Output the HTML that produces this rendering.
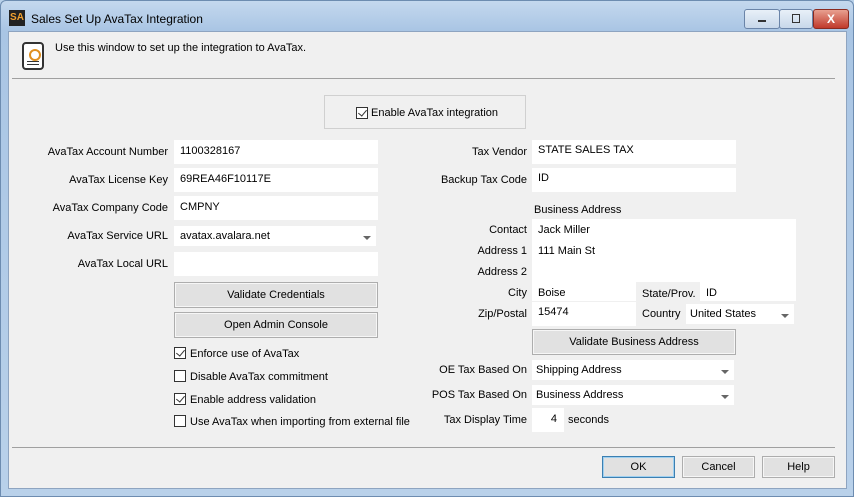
<!DOCTYPE html><html><head><style>
body{margin:0;width:854px;height:497px;overflow:hidden;font-family:"Liberation Sans",sans-serif;font-size:11px;color:#000;background:#b9d1ea}
.a{position:absolute}
.win{position:absolute;left:0;top:0;width:852px;height:495px;border:1px solid #6d8cb0;background:linear-gradient(#c4d8ee,#a9c5e4 30px,#b9d1ea);border-radius:6px 6px 0 0}
.cl{position:absolute;left:8px;top:31px;width:837px;height:456px;background:#f0f0f0;border:1px solid #8ea4c0}
.in{position:absolute;background:#fff;height:24px;line-height:22px;padding-left:6px;box-sizing:border-box}
.lb{position:absolute;text-align:right;height:24px;line-height:24px}
.bt{position:absolute;background:#e1e1e1;border:1px solid #adadad;box-shadow:inset 0 0 0 1px #f6f6f6;text-align:center;box-sizing:border-box}
.cb{position:absolute;width:12px;height:12px;border:1px solid #333;background:#fff;box-sizing:border-box}
.ck:after{content:"";position:absolute;left:3px;top:0px;width:4px;height:7px;border:solid #333;border-width:0 1.5px 1.5px 0;transform:rotate(40deg)}
.dd:after{content:"";position:absolute;right:5px;top:10px;border:4px solid transparent;border-top:4px solid #666}
</style></head><body>
<div class="win"></div>
<div class="a" style="left:9px;top:10px;width:16px;height:16px;background:#222;color:#f0a030;font-weight:bold;font-size:10px;line-height:16px;text-align:center">SA</div>
<div class="a" style="left:31px;top:12px;font-size:12px">Sales Set Up AvaTax Integration</div>
<div class="a" style="left:744px;top:9px;width:34px;height:18px;border:1px solid #6a84a8;border-radius:3px;background:linear-gradient(#e8f0f8,#c8d8ea)"><div class="a" style="left:13px;top:10px;width:8px;height:2px;background:#333"></div></div>
<div class="a" style="left:779px;top:9px;width:32px;height:18px;border:1px solid #6a84a8;border-radius:3px;background:linear-gradient(#e8f0f8,#c8d8ea)"><div class="a" style="left:12px;top:4px;width:6px;height:7px;border:1px solid #333"></div></div>
<div class="a" style="left:813px;top:9px;width:34px;height:18px;border:1px solid #8a2a20;border-radius:3px;background:linear-gradient(#e8a090,#c0392b);color:#fff;font-weight:bold;text-align:center;line-height:18px;font-size:12px">X</div>
<div class="cl"></div>
<div class="a" style="left:22px;top:42px;width:22px;height:28px;border:2px solid #333;border-radius:4px;background:#fff;box-sizing:border-box"><div class="a" style="left:5px;top:5px;width:8px;height:8px;border:2px solid #e09020;border-radius:50%"></div><div class="a" style="left:3px;top:17px;width:12px;height:1px;background:#333"></div><div class="a" style="left:3px;top:20px;width:12px;height:1px;background:#333"></div></div>
<div class="a" style="left:55px;top:42px">Use this window to set up the integration to AvaTax.</div>
<div class="a" style="left:12px;top:78px;width:823px;height:1px;background:#a0a0a0"></div>
<div class="a" style="left:324px;top:95px;width:202px;height:34px;border:1px solid #d0d0d0;box-sizing:border-box"></div>
<div class="cb ck" style="left:356px;top:107px"></div><div class="a" style="left:371px;top:107px">Enable AvaTax integration</div>
<div class="lb" style="left:10px;width:158px;top:140px">AvaTax Account Number</div><div class="in" style="left:174px;top:140px;width:204px">1100328167</div>
<div class="lb" style="left:10px;width:158px;top:168px">AvaTax License Key</div><div class="in" style="left:174px;top:168px;width:204px">69REA46F10117E</div>
<div class="lb" style="left:10px;width:158px;top:196px">AvaTax Company Code</div><div class="in" style="left:174px;top:196px;width:204px">CMPNY</div>
<div class="lb" style="left:10px;width:158px;top:224px">AvaTax Service URL</div><div class="in dd" style="left:174px;top:226px;width:202px;height:20px;line-height:20px">avatax.avalara.net</div>
<div class="lb" style="left:10px;width:158px;top:252px">AvaTax Local URL</div><div class="in" style="left:174px;top:252px;width:204px"></div>
<div class="bt" style="left:174px;top:282px;width:204px;height:26px;line-height:24px">Validate Credentials</div>
<div class="bt" style="left:174px;top:312px;width:204px;height:26px;line-height:24px">Open Admin Console</div>
<div class="cb ck" style="left:174px;top:347px"></div><div class="a" style="left:190px;top:348px">Enforce use of AvaTax</div>
<div class="cb" style="left:174px;top:370px"></div><div class="a" style="left:190px;top:371px">Disable AvaTax commitment</div>
<div class="cb ck" style="left:174px;top:393px"></div><div class="a" style="left:190px;top:394px">Enable address validation</div>
<div class="cb" style="left:174px;top:415px"></div><div class="a" style="left:190px;top:416px">Use AvaTax when importing from external file</div>
<div class="lb" style="left:400px;width:127px;top:140px">Tax Vendor</div><div class="in" style="left:532px;top:140px;width:204px;line-height:20px">STATE SALES TAX</div>
<div class="lb" style="left:400px;width:127px;top:168px">Backup Tax Code</div><div class="in" style="left:532px;top:168px;width:204px;line-height:20px">ID</div>
<div class="a" style="left:534px;top:204px">Business Address</div>
<div class="a" style="left:532px;top:219px;width:264px;height:82px;background:#fff"></div>
<div class="lb" style="left:400px;width:127px;top:218px">Contact</div><div class="a" style="left:538px;top:224px">Jack Miller</div>
<div class="lb" style="left:400px;width:127px;top:239px">Address 1</div><div class="a" style="left:538px;top:245px">111 Main St</div>
<div class="lb" style="left:400px;width:127px;top:260px">Address 2</div>
<div class="lb" style="left:400px;width:127px;top:281px">City</div><div class="a" style="left:538px;top:287px">Boise</div>
<div class="a" style="left:636px;top:282px;width:64px;height:20px;background:#f0f0f0"></div>
<div class="a" style="left:642px;top:288px">State/Prov.</div><div class="a" style="left:706px;top:287px">ID</div>
<div class="lb" style="left:400px;width:127px;top:302px">Zip/Postal</div><div class="in" style="left:532px;top:302px;width:104px;line-height:20px">15474</div>
<div class="a" style="left:636px;top:302px;width:50px;height:24px;background:#f0f0f0"></div>
<div class="a" style="left:642px;top:308px">Country</div><div class="in dd" style="left:686px;top:304px;width:108px;height:20px;line-height:20px;padding-left:4px">United States</div>
<div class="bt" style="left:532px;top:329px;width:204px;height:26px;line-height:24px">Validate Business Address</div>
<div class="lb" style="left:400px;width:127px;top:358px">OE Tax Based On</div><div class="in dd" style="left:532px;top:360px;width:202px;height:20px;line-height:20px;padding-left:4px">Shipping Address</div>
<div class="lb" style="left:400px;width:127px;top:383px">POS Tax Based On</div><div class="in dd" style="left:532px;top:385px;width:202px;height:20px;line-height:20px;padding-left:4px">Business Address</div>
<div class="lb" style="left:400px;width:127px;top:408px">Tax Display Time</div><div class="in" style="left:532px;top:408px;width:32px;text-align:right;padding-right:7px">4</div><div class="a" style="left:568px;top:414px">seconds</div>
<div class="a" style="left:12px;top:447px;width:823px;height:1px;background:#a0a0a0"></div>
<div class="bt" style="left:602px;top:456px;width:73px;height:22px;line-height:20px;border:1px solid #3c7fb1;box-shadow:inset 0 0 0 1px #9fd0f0">OK</div>
<div class="bt" style="left:682px;top:456px;width:73px;height:22px;line-height:20px">Cancel</div>
<div class="bt" style="left:762px;top:456px;width:73px;height:22px;line-height:20px">Help</div>
</body></html>
